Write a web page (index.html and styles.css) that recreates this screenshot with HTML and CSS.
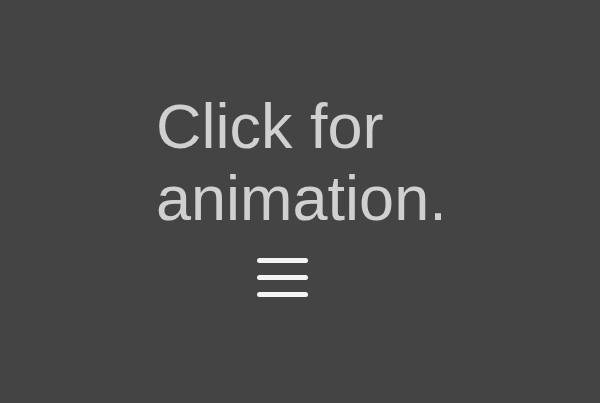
FILE: index.html
```html
<!DOCTYPE html>
<html>
<head>
<meta charset="utf-8">
<link rel="stylesheet" href="styles.css">
</head>
<body>
<main class="stage">
  <p class="caption">Click for animation.</p>
  <button class="burger" aria-label="Menu">
    <span class="bar"></span>
    <span class="bar"></span>
    <span class="bar"></span>
  </button>
</main>
</body>
</html>
```
FILE: styles.css
```css
html, body {
  margin: 0;
  height: 100%;
  background: #444444;
}
.stage {
  width: 292px;
  margin: 0 auto;
  padding: 90px 0 0 4px;
  display: flex;
  flex-direction: column;
}
.caption {
  margin: 0;
  font-family: "Liberation Sans", Arial, sans-serif;
  font-size: 63px;
  color: #d0d0d0;
}
.burger {
  margin: 24px 0 0 101px;
  padding: 0;
  border: 0;
  background: none;
  width: 51px;
  display: flex;
  flex-direction: column;
  gap: 12px;
}
.bar {
  display: block;
  width: 51px;
  height: 5px;
  border-radius: 3px;
  background: #f4f4f4;
}
```
